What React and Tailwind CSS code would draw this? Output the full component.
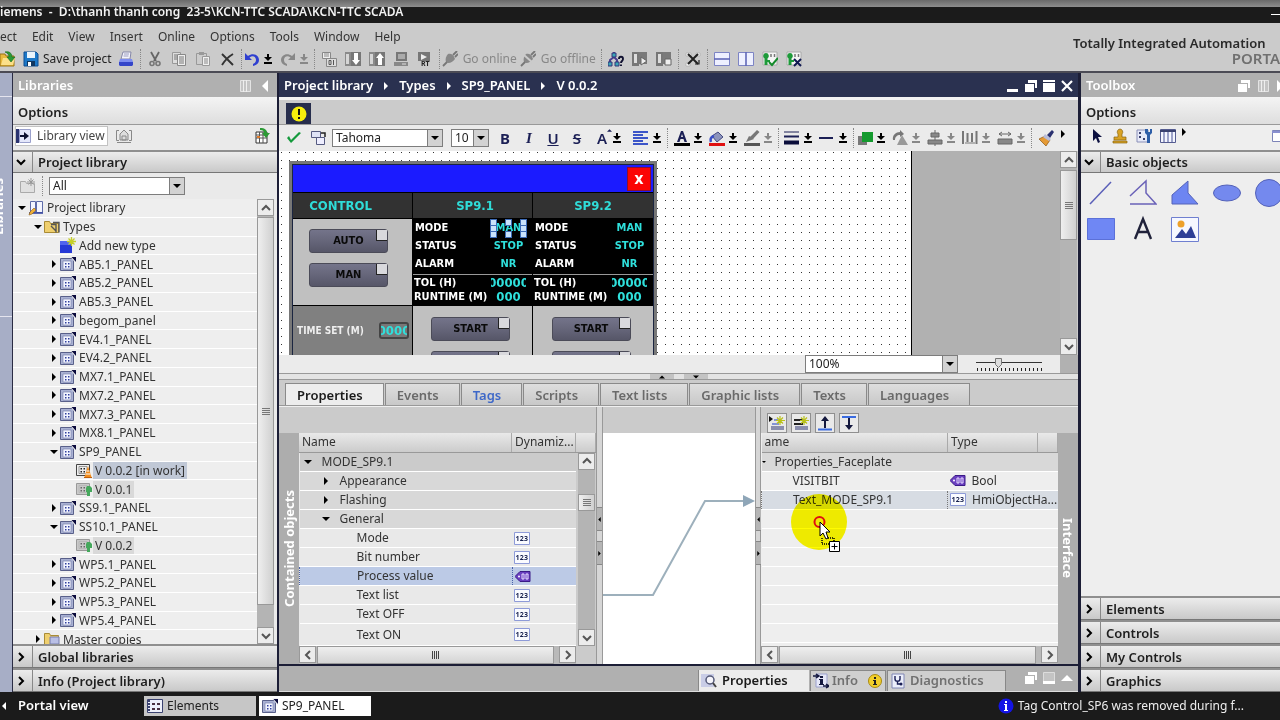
import React from "react";

const UI = "font-['Noto_Sans','Open_Sans',sans-serif]";
const HMI = "font-['DejaVu_Sans_Condensed','DejaVu_Sans',sans-serif]";

/* ---------- icons ---------- */

function Ico({ children, w = 16, h = 16 }) {
  return (
    <svg width={w} height={h} viewBox={`0 0 ${w} ${h}`} className="block shrink-0" aria-hidden="true">
      {children}
    </svg>
  );
}

const OpenIcon = () => (
  <Ico>
    <path d="M0 3h5l1 2h8v10H0z" fill="#e8b93c" stroke="#9a7417" />
    <path d="M1 14l2-7h12l-2 7z" fill="#fbe08a" />
    <path d="M5 1c4-1 7 1 7 5h3l-4 5-4-5h2c0-2-1-4-4-5z" fill="#2c9a35" stroke="#14661c" strokeWidth=".6" />
  </Ico>
);
const SaveIcon = () => (
  <Ico>
    <path d="M1 1h12l2 2v12H1z" fill="#1c78c8" stroke="#0c4d92" />
    <path d="M4 1h8v6H4z" fill="#e8f3fc" />
    <path d="M4 10h8v5H4z" fill="#10365f" />
    <path d="M5 11h3v4H5z" fill="#fff" />
  </Ico>
);
const PrintIcon = () => (
  <Ico>
    <path d="M5 1h8l-1 7H3z" fill="#f4f4fb" stroke="#8587a8" />
    <path d="M6 3h5M5.500 5h5" stroke="#9a9cc0" />
    <path d="M2 8h12l1 3H1z" fill="#7d8df0" />
    <path d="M1 11h14v3l-1 1H2l-1-1z" fill="#3445c9" />
  </Ico>
);
const CutIcon = () => (
  <Ico>
    <path d="M4 1l5 9M12 1L7 10" stroke="#666" strokeWidth="1.800" />
    <circle cx="5" cy="12.500" r="2" fill="none" stroke="#777" strokeWidth="1.600" />
    <circle cx="11" cy="12.500" r="2" fill="none" stroke="#777" strokeWidth="1.600" />
  </Ico>
);
const CopyIcon = () => (
  <Ico>
    <path d="M1.500 1.500h8v11h-8z" fill="#ddd" stroke="#999" />
    <path d="M6.500 3.500h8v11h-8z" fill="#eee" stroke="#888" />
    <path d="M8 6h5M8 8h5M8 10h5M8 12h5M3 4h3M3 6h3M3 8h3" stroke="#777" />
  </Ico>
);
const PasteIcon = () => (
  <Ico>
    <path d="M1.500 2.500h10v11h-10z" fill="#ccc" stroke="#999" />
    <path d="M4 1h5v3H4z" fill="#999" />
    <path d="M7.500 5.500h7v9h-7z" fill="#f0f0f0" stroke="#999" />
    <path d="M9 8h4M9 10h4M9 12h4" stroke="#888" />
  </Ico>
);
const DeleteIcon = () => (
  <Ico>
    <path d="M3 3l11 11M14 3C9 6 6 9 3 14" stroke="#333" strokeWidth="1.900" fill="none" />
  </Ico>
);
const CrossRefIcon = () => (
  <Ico>
    <path d="M1 2h5v3H1zM11 2h4v3h-4zM1 12h4v3H1z" fill="#f2f2f2" stroke="#aaa" strokeWidth=".6" />
    <path d="M3 3l10 10M13 3L3 13" stroke="#222" strokeWidth="2" fill="none" />
    <path d="M10 13h4v-4" stroke="#222" strokeWidth="1.200" fill="none" />
  </Ico>
);
const UndoIcon = ({ c = "#2f3fd0", flip }) => (
  <Ico>
    <g transform={flip ? "translate(16 0) scale(-1 1)" : undefined}>
      <path d="M1 2v7h7L5.500 6.500C9 4 12 6 12 9c0 2-1 3-3 4v2c4-1 6-3 6-6 0-5-6-8-11-4z" fill={c} />
    </g>
  </Ico>
);
const Drop = ({ c = "#000" }) => (
  <Ico w={8} h={12}>
    <path d="M3 1h2v3h3L4 8 0 4h3z" fill={c} />
    <path d="M0 9h8v2H0z" fill={c} />
  </Ico>
);
const CompileIcon = () => (
  <Ico>
    <path d="M1.500 1.500h8v6h-8z" fill="#eee" stroke="#888" />
    <path d="M3 3h5M3 5h5" stroke="#888" />
    <path d="M5.500 7.500h10v8h-10z" fill="#ddd" stroke="#888" />
    <path d="M8 9.500h2v4H8zM12.500 9v5" stroke="#555" fill="none" />
  </Ico>
);
const LoadIcon = ({ up }) => (
  <Ico>
    <path d="M0 1h6v14H0z" fill="#8a8a8a" />
    <path d="M1 3h3v10H1z" fill="#d6d6d6" />
    <path d="M6 1h10v14H6z" fill="#777" />
    <path d={up ? "M9 14V7H7l4-5 4 5h-2v7z" : "M9 2v7H7l4 5 4-5h-2V2z"} fill="#fff" />
  </Ico>
);
const ScreenIcon = () => (
  <Ico>
    <path d="M3 1h11v9H3z" fill="#777" />
    <path d="M5 3h7v5H5z" fill="#aaa" />
    <path d="M1 11h14v4H1z" fill="#888" />
    <path d="M9 13h4" stroke="#ddd" />
  </Ico>
);
const RtIcon = () => (
  <Ico>
    <path d="M1 1h12v9H1z" fill="#777" />
    <path d="M4 3l6 3-6 3z" fill="#eee" />
    <text x="4" y="15" fontSize="7" fontWeight="700" fill="#222">RT</text>
  </Ico>
);
const PlugIcon = ({ off }) => (
  <Ico>
    <path d="M6 3c3-1 6 1 7 5-3 4-7 5-9 3-1-3 0-6 2-8z" fill="#888" />
    <path d="M1 15l4-4M11 4l4-4M13 6l3-3" stroke="#777" strokeWidth="1.800" />
    {off && <path d="M4 4l9 8" stroke="#cbcbcb" strokeWidth="2" />}
  </Ico>
);
const NetIcon = () => (
  <Ico>
    <path d="M2 13V9l4-3 3 3v4M6 6V1" stroke="#4a3f8f" strokeWidth="2" fill="none" />
    <path d="M4 2h4v4H4zM0 11h4v4H0zM7 11h4v4H7z" fill="#39a6b5" stroke="#35357a" />
    <path d="M11 8c0-3 4-3 4 0 0 2-2 2-2 4M13 13.500v1.500" stroke="#101030" strokeWidth="1.900" fill="none" />
  </Ico>
);
const SimIcon = ({ stop }) => (
  <Ico>
    <path d="M0 1h7v14H0z" fill="#777" />
    <path d="M2 3h3v9H2z" fill="#ddd" />
    <path d="M7 1h8v12H7z" fill="#7a7a7a" />
    {stop ? <path d="M9 8h6v6H9z" fill="#eee" stroke="#666" /> : <path d="M9 6l6 4-6 4z" fill="#eee" stroke="#666" />}
  </Ico>
);
const SplitIcon = ({ v }) => (
  <Ico>
    <path d="M.5 1.500h15v13H.5z" fill="#eef0ff" stroke="#7d84c4" />
    <path d={v ? "M8 1v14" : "M0 8h16"} stroke="#6068b8" strokeWidth="1.600" />
  </Ico>
);
const PlcIcon = ({ x }) => (
  <Ico>
    <path d="M1 1h14v13H1z" fill="#f4f4f4" stroke="#aaa" />
    <path d="M9 3v3M12.500 3v3" stroke="#777" strokeWidth="1.500" />
    <path d="M4 2a3 3 0 011.500 5.500V9H8v2H5.500v3h-3V7.500A3 3 0 014 2z" fill="#1e9a3a" />
    {x ? <path d="M8 8l7 7M15 8l-7 7" stroke="#101850" strokeWidth="2" /> : <path d="M7 11l3 3 6-7" stroke="#138a2a" strokeWidth="2" fill="none" />}
  </Ico>
);
const Chevron = ({ d = "down", c = "#333" }) => (
  <Ico w={12} h={12}>
    <path
      d={{ down: "M2 4l4 4 4-4", up: "M2 8l4-4 4 4", left: "M8 2L4 6l4 4", right: "M4 2l4 4-4 4" }[d]}
      fill="none" stroke={c} strokeWidth="2"
    />
  </Ico>
);
const Tri = ({ d = "right", c = "#000", s = 8 }) => (
  <svg width={s} height={s} viewBox="0 0 8 8" className="block shrink-0" aria-hidden="true">
    <path d={{ right: "M2 0l4 4-4 4z", down: "M0 2h8L4 6z", left: "M6 0L2 4l4 4z", up: "M0 6h8L4 2z" }[d]} fill={c} />
  </svg>
);
const ColumnsIcon = () => (
  <Ico w={11} h={12}>
    <path d="M.5 .5h10v11H.5z" fill="#c4c4c4" stroke="#e4e4e4" />
    <path d="M3.500 0v12M6.500 0v12" stroke="#eee" />
  </Ico>
);
const RestoreIcon = () => (
  <Ico w={12} h={12}>
    <path d="M3 0h9v8h-2V3H3z" fill="#fff" />
    <path d="M0 4h9v8H0z" fill="#fff" />
  </Ico>
);
const TypeIcon = () => (
  <Ico>
    <path d="M.5 2.500h13v12H.5z" fill="#a9b1d3" stroke="#59608a" />
    <path d="M3 5h8v8H3z" fill="#f3f5ff" stroke="#7a82ad" strokeWidth=".7" />
    <path d="M5 7h1.500v1.500H5zM8 7h1.500v1.500H8zM5 10h1.500v1.500H5zM8 10h1.500v1.500H8z" fill="#2f3f9e" />
    <path d="M10 0h6v8z" fill="#f3f3f3" />
    <path d="M11.500 1H16v5z" fill="#0a0a3c" />
  </Ico>
);
const VersionIcon = ({ work }) => (
  <Ico>
    <path d="M.5 2.500h13v11H.5z" fill={work ? "#eee" : "#c9c9c9"} stroke={work ? "#444" : "#999"} />
    <path d="M3 4.500h8v7H3z" fill="none" stroke={work ? "#777" : "#b0b0b0"} strokeWidth=".7" />
    <path d="M4.500 6H6v1.500H4.500zM7.500 6H9v1.500H7.500zM4.500 9H6v1.500H4.500zM7.500 9H9v1.500H7.500z" fill={work ? "#222" : "#666"} />
    {work ? (
      <>
        <path d="M12 4l3.500 11h-7z" fill="#f08c1c" />
        <path d="M10.500 9h3M9.500 12h5" stroke="#fff" />
        <path d="M8 15.500h8" stroke="#c06010" />
      </>
    ) : (
      <path d="M11 5h3l2 2v4h-2v4h-3v-4H10V7z" fill="#45a85c" />
    )}
  </Ico>
);
const FolderIcon = ({ badge }) => (
  <Ico>
    <path d="M.5 2.500h5l1 2h8v9H.5z" fill="#efcf6e" stroke="#a98b35" />
    {badge === "types" ? (
      <path d="M7 5.500h5v8M9 3.500h6v10M7 7l5 5" fill="none" stroke="#555" strokeWidth="1.400" />
    ) : (
      <path d="M6 6h9v7H6z" fill="#b9bfe6" stroke="#767dad" />
    )}
  </Ico>
);
const BookIcon = () => (
  <Ico>
    <path d="M2.500 1.500h5v11h-5zM8.500 1.500h6v11h-6z" fill="#f3f5ff" stroke="#5e6ba8" />
    <path d="M1 13h14" stroke="#3848a0" strokeWidth="1.600" />
    <path d="M1 15l1-3 4-4 2 2-4 4z" fill="#f0b13a" stroke="#8b5d14" strokeWidth=".6" />
  </Ico>
);
const NewTypeIcon = () => (
  <Ico>
    <path d="M0 4h12v12H0z" fill="#2639d6" />
    <path d="M0 4h12v4H0z" fill="#5163ee" />
    <path d="M11.500 0v9M7 4.500h9M8.500 1.500l6 6M14.500 1.500l-6 6" stroke="#c5cf2a" strokeWidth="1.300" />
  </Ico>
);
const ValueIcon = () => (
  <Ico w={16} h={13}>
    <path d="M.5 .5h15v12H.5z" fill="#fafbff" stroke="#8e9bd8" />
    <text x="1.500 5.800 10.100" y="9" fontSize="7" fontWeight="700" fill="#16204e">123</text>
  </Ico>
);
const TagIcon = () => (
  <Ico w={16} h={13}>
    <path d="M0 6.500l5-5h10v10H5z" fill="#6a3fc0" stroke="#3a1a86" />
    <path d="M7 4v5h2V4zM11 4v5h2V4z" fill="none" stroke="#e6dcff" />
    <circle cx="4" cy="6.500" r="1" fill="#fff" />
  </Ico>
);

/* ---------- shared pieces ---------- */

const barBg = "bg-linear-to-b from-[#ececec] to-[#c9c9c9]";

function Sep() {
  return <span className="mx-[2px] h-5 w-px shrink-0 border-l border-dotted border-[#888]" />;
}
function IconButton({ label, children, wide }) {
  return (
    <button type="button" aria-label={label} className={`flex h-5 shrink-0 items-center justify-center ${wide ? "w-6" : ""}`}>
      {children}
    </button>
  );
}
function Combo({ label, value, className }) {
  return (
    <span className={`relative flex h-[18px] shrink-0 ${className}`}>
      <select aria-label={label} className="w-full appearance-none border border-[#7d7d7d] bg-white px-[3px] text-xs leading-4 text-[#222]">
        <option>{value}</option>
      </select>
      <span className="pointer-events-none absolute inset-y-0 right-0 flex w-4 items-center justify-center border border-[#7d7d7d] bg-[#d2d2d2]">
        <Tri d="down" />
      </span>
    </span>
  );
}
function ScrollButton({ d }) {
  return (
    <button type="button" aria-label={`Scroll ${d}`} className="flex h-[17px] w-[17px] shrink-0 items-center justify-center border border-[#999] bg-[#ececec]">
      <Chevron d={d} c="#555" />
    </button>
  );
}
function VScroll({ before, size }) {
  return (
    <div className="flex w-[17px] shrink-0 flex-col bg-[#b4b4b4]">
      <ScrollButton d="up" />
      <div className={before} />
      <div className={`flex flex-col items-center justify-center gap-px border border-[#999] bg-linear-to-r from-[#efefef] to-[#d0d0d0] ${size}`}>
        {[0, 1, 2, 3].map((i) => <span key={i} className="h-px w-2 bg-[#777]" />)}
      </div>
      <div className="flex-1" />
      <ScrollButton d="down" />
    </div>
  );
}
function HScroll() {
  return (
    <div className="flex h-[18px] shrink-0 gap-px bg-[#b9b9b9]">
      <ScrollButton d="left" />
      <div className="mr-1 flex flex-1 items-center justify-center gap-px border border-[#999] bg-linear-to-b from-[#efefef] to-[#d4d4d4]">
        {[0, 1, 2, 3].map((i) => <span key={i} className="h-2 w-px bg-[#444]" />)}
      </div>
      <ScrollButton d="right" />
    </div>
  );
}
function PaneHeader({ title, children }) {
  return (
    <div className="flex h-6 shrink-0 items-center bg-[#b0b0b0] pt-px pl-[5px] text-[13px] font-semibold text-white">
      <h2 className="flex-1">{title}</h2>
      {children}
    </div>
  );
}
function OptionsBar() {
  return (
    <h3 className="flex h-7 shrink-0 items-center border-b border-[#999] bg-linear-to-b from-[#f4f4f4] to-[#dedede] px-[5px] pt-[5px] text-[13px] font-semibold text-[#222]">
      Options
    </h3>
  );
}
function Section({ title, open }) {
  return (
    <button type="button" aria-expanded={!!open} className={`flex w-full shrink-0 items-stretch border-t-2 border-b border-t-[#8f8f8f] border-b-[#777] text-left text-[13px] font-semibold text-[#1e1e1e] ${open ? "h-[23px]" : "h-6"} ${barBg}`}>
      <span className="flex w-5 items-center justify-center border-r border-[#888] pr-1">
        <Chevron d={open ? "down" : "right"} c="#000" />
      </span>
      <span className="self-center pl-[5px] leading-5">{title}</span>
    </button>
  );
}

/* ---------- title, menu, toolbar ---------- */

const menus = ["ect", "Edit", "View", "Insert", "Online", "Options", "Tools", "Window", "Help"];

function Header() {
  return (
    <header className="shrink-0 border-b-2 border-[#4b4b55] bg-[#cbcbcb]">
      <div className="h-[7px] bg-linear-to-b from-[#6a6a6a] to-[#8e8e8e]" />
      <div className="flex h-4 items-center justify-between bg-[#1b1b1b] pb-[6px] text-[12px] font-semibold text-[#f2f2f2]">
        <h1 className="whitespace-pre leading-4">{"iemens  -  D:\\thanh thanh cong  23-5\\KCN-TTC SCADA\\KCN-TTC SCADA"}</h1>
        <span className="mt-1 h-px w-[9px] bg-white" />
      </div>
      <div className="flex h-12 overflow-hidden">
        <div className="min-w-0 flex-1">
          <nav className="flex h-[26px] items-center gap-[15px] pt-[2px] text-xs text-[#333]">
            {menus.map((m) => <button type="button" key={m}>{m}</button>)}
          </nav>
          <div className="flex h-5 items-center text-xs text-[#222]">
            <IconButton label="Open"><OpenIcon /></IconButton>
            <span className="w-[7px]" />
            <button type="button" className="flex items-center gap-1"><SaveIcon />Save project</button>
            <span className="w-[2px]" />
            <IconButton label="Print" wide><PrintIcon /></IconButton>
            <Sep />
            <IconButton label="Cut" wide><CutIcon /></IconButton>
            <IconButton label="Copy" wide><CopyIcon /></IconButton>
            <IconButton label="Paste" wide><PasteIcon /></IconButton>
            <IconButton label="Delete" wide><DeleteIcon /></IconButton>
            <Sep />
            <IconButton label="Undo"><UndoIcon /></IconButton>
            <span className="w-1" />
            <IconButton label="Undo list"><Drop /></IconButton>
            <span className="w-1" />
            <IconButton label="Redo" wide><UndoIcon flip c="#888" /></IconButton>
            <IconButton label="Redo list"><Drop c="#888" /></IconButton>
            <span className="w-1" />
            <Sep />
            <IconButton label="Compile" wide><CompileIcon /></IconButton>
            <IconButton label="Download" wide><LoadIcon /></IconButton>
            <IconButton label="Upload" wide><LoadIcon up /></IconButton>
            <IconButton label="Simulate" wide><ScreenIcon /></IconButton>
            <IconButton label="Start runtime" wide><RtIcon /></IconButton>
            <Sep />
            <button type="button" className="flex items-center gap-[5px] text-[#888]"><PlugIcon />Go online</button>
            <span className="w-[3px]" />
            <button type="button" className="flex items-center gap-[5px] text-[#888]"><PlugIcon off />Go offline</button>
            <span className="w-[3px]" />
            <Sep />
            <IconButton label="Accessible devices" wide><NetIcon /></IconButton>
            <IconButton label="Start simulation" wide><SimIcon /></IconButton>
            <IconButton label="Stop simulation" wide><SimIcon stop /></IconButton>
            <Sep />
            <IconButton label="Cross-references" wide><CrossRefIcon /></IconButton>
            <Sep />
            <IconButton label="Split horizontally" wide><SplitIcon /></IconButton>
            <IconButton label="Split vertically" wide><SplitIcon v /></IconButton>
            <IconButton label="Connect" wide><PlcIcon /></IconButton>
            <IconButton label="Disconnect" wide><PlcIcon x /></IconButton>
          </div>
        </div>
        <div className="flex w-[207px] shrink-0 flex-col pt-3 font-semibold">
          <span className="whitespace-nowrap text-[13px] leading-4 text-[#2a2a2a]">Totally Integrated Automation</span>
          <span className="self-end text-[15px] leading-[14px] text-[#707070]">PORTA</span>
        </div>
      </div>
    </header>
  );
}

/* ---------- library tree ---------- */

const P = (name) => ({ lvl: 2, name, icon: <TypeIcon />, arrow: "right" });
const tree = [
  { lvl: 0, name: "Project library", icon: <BookIcon />, arrow: "down" },
  { lvl: 1, name: "Types", icon: <FolderIcon badge="types" />, arrow: "down" },
  { lvl: 2, name: "Add new type", icon: <NewTypeIcon /> },
  P("AB5.1_PANEL"), P("AB5.2_PANEL"), P("AB5.3_PANEL"), P("begom_panel"),
  P("EV4.1_PANEL"), P("EV4.2_PANEL"),
  P("MX7.1_PANEL"), P("MX7.2_PANEL"), P("MX7.3_PANEL"), P("MX8.1_PANEL"),
  { ...P("SP9_PANEL"), arrow: "down" },
  { lvl: 3, name: "V 0.0.2 [in work]", icon: <VersionIcon work />, mark: "bg-[#c0c8d6]" },
  { lvl: 3, name: "V 0.0.1", icon: <VersionIcon />, mark: "bg-[#d9d9d9]" },
  P("SS9.1_PANEL"),
  { ...P("SS10.1_PANEL"), arrow: "down" },
  { lvl: 3, name: "V 0.0.2", icon: <VersionIcon />, mark: "bg-[#d9d9d9]" },
  P("WP5.1_PANEL"), P("WP5.2_PANEL"), P("WP5.3_PANEL"), P("WP5.4_PANEL"),
  { lvl: 1, name: "Master copies", icon: <FolderIcon />, arrow: "right" },
];
const indent = ["pl-1", "pl-5", "pl-9", "pl-[52px]"];

function Libraries() {
  return (
    <aside className="flex w-[264px] shrink-0 flex-col bg-[#eaeaea]">
      <PaneHeader title="Libraries">
        <ColumnsIcon />
        <button type="button" aria-label="Collapse" className="mr-[6px] ml-2"><Tri d="left" c="#fff" s={12} /></button>
      </PaneHeader>
      <OptionsBar />
      <div className="flex h-[25px] shrink-0 items-center gap-2 px-[2px] pb-1">
        <button type="button" className="flex h-5 items-center gap-[5px] border border-[#c2c2c2] bg-white pr-[2px] text-xs text-[#444]">
          <Ico>
            <path d="M0 1h3v14H0z" fill="#2a3370" />
            <path d="M3.500 1.500h11v13h-11z" fill="#e4e7fa" stroke="#9aa0cc" />
            <path d="M4 7h4V4l5 4-5 4V9H4z" fill="#0e1130" />
          </Ico>
          Library view
        </button>
        <IconButton label="Element view">
          <Ico>
            <path d="M3 2.500H.5v10H3M13 2.500h2.500v10H13M1 14.500h14" fill="none" stroke="#888" />
            <path d="M8 2l4 4v6H4V6z" fill="#ddd" stroke="#888" />
            <path d="M6 8h4v4H6z" fill="none" stroke="#888" />
          </Ico>
        </IconButton>
        <span className="flex-1" />
        <span className="pr-1">
          <IconButton label="Open library">
            <Ico>
              <path d="M1 4h11v11H1z" fill="#fff" stroke="#333" />
              <path d="M1 7h11M1 10h11M4.500 4v11M8 4v11" stroke="#555" />
              <path d="M2 8h3v2H2z" fill="#e07a2a" />
              <path d="M5 0c5 0 7 2 7 5h3l-4 5-4-5h2c0-2-1-3-4-3z" fill="#2c9a35" />
            </Ico>
          </IconButton>
        </span>
      </div>
      <Section title="Project library" open />
      <div className="flex h-[25px] shrink-0 items-center gap-1 pl-[7px]">
        <IconButton label="New folder">
          <Ico>
            <path d="M.5 3.500h5l1 2h8v9H.5z" fill="#e0e0e0" stroke="#aaa" />
            <path d="M11 0v8M7 4h8M8.500 1.500l5 5M13.500 1.500l-5 5" stroke="#999" />
          </Ico>
        </IconButton>
        <Sep />
        <Combo label="Filter" value="All" className="w-[136px]" />
      </div>
      <div className="flex min-h-0 flex-1 pt-px pr-[3px]">
        <div className="min-w-0 flex-1 overflow-hidden bg-[#eeeeee]">
          <ul className="grid h-[450px] auto-rows-fr text-xs text-[#333]">
            {tree.map((n, i) => (
              <li key={i} className={`flex min-h-0 items-center border-b border-white ${indent[n.lvl]}`}>
                <span className="flex w-[10px] justify-center">{n.arrow && <Tri d={n.arrow} />}</span>
                <span className="ml-px">{n.icon}</span>
                <span className={`ml-px px-[2px] leading-[17px] ${n.mark || ""}`}>{n.name}</span>
              </li>
            ))}
          </ul>
        </div>
        <VScroll before="h-px" size="h-[388px]" />
      </div>
      <Section title="Global libraries" />
      <Section title="Info (Project library)" />
    </aside>
  );
}

/* ---------- editor ---------- */

function HmiButton({ children }) {
  return (
    <button type="button" className="relative flex h-6 w-[79px] shrink-0 items-center justify-center rounded-[3px] border border-[#4b4b58] bg-linear-to-b from-[#74748a] via-[#66667a] to-[#565668] text-[11px] font-bold text-[#0a0a0a]">
      {children}
      <span className="absolute top-0 right-0 h-[11px] w-[11px] border-b border-l border-[#222] bg-[#d9d9dd]" />
    </button>
  );
}

function Handles() {
  return (
    <span className="absolute inset-x-0 -inset-y-[2px] grid grid-cols-3 grid-rows-3 content-between justify-between">
      {[0, 1, 2, 3, 4, 5, 6, 7, 8].map((i) => (
        <span key={i} className={`h-[5px] w-[5px] self-center bg-[#c9e2fb] outline-1 outline-[#3c6ab5] ${i % 3 === 0 ? "justify-self-start" : i % 3 === 1 ? "justify-self-center" : "justify-self-end"} ${i === 4 ? "invisible" : ""}`} />
      ))}
    </span>
  );
}

function Unit({ selected }) {
  const rows = [["MODE", "MAN"], ["STATUS", "STOP"], ["ALARM", "NR"]];
  return (
    <div className="flex flex-col bg-[#c0c0c0]">
      <div className="bg-black text-[11px] font-bold text-white">
        <div className="h-[56px] border-b border-[#999]">
          {rows.map(([k, v], i) => (
            <div key={k} className="flex h-[18px] items-center justify-between pr-[6px] pl-[2px]">
              <span>{k}</span>
              <span className="relative flex h-[14px] w-[35px] items-center justify-center text-[#2fe0dc]">
                {v}
                {selected && i === 0 && <Handles />}
              </span>
            </div>
          ))}
        </div>
        <div className="flex h-[30px] justify-between pr-[6px] pl-px">
          <div className="flex flex-col justify-center leading-[14px] whitespace-nowrap">
            <span>TOL (H)</span>
            <span>RUNTIME (M)</span>
          </div>
          <div className="flex w-[35px] flex-col items-center justify-center overflow-hidden text-[13px] leading-[14px] text-[#2fe0dc]">
            <span>00000</span>
            <span>000</span>
          </div>
        </div>
      </div>
      <div className="flex flex-col items-center gap-[10px] border-t border-black pt-[11px] pr-1">
        <HmiButton>START</HmiButton>
        <HmiButton>STOP</HmiButton>
      </div>
    </div>
  );
}

function Faceplate() {
  return (
    <div className={`absolute top-[10px] left-[10px] w-[368px] border-[3px] border-[#777] ${HMI}`}>
      <div className="border border-[#1b2540]">
        <div className="flex h-7 items-center justify-end border-b border-black bg-[#1b1bff]">
          <button type="button" aria-label="Close" className="mr-[2px] flex h-6 w-6 items-center justify-center border border-[#8c1030] bg-[#fb0404] text-[16px] leading-4 font-bold text-white">x</button>
        </div>
        <div className="grid h-[25px] grid-cols-3 divide-x divide-black bg-[#323232] text-[13px] font-bold text-[#2fdcd8]">
          <span className="flex items-center justify-center pr-6">CONTROL</span>
          <span className="flex items-center justify-center pl-[5px]">SP9.1</span>
          <span className="flex items-center justify-center">SP9.2</span>
        </div>
        <div className="grid h-[240px] grid-cols-3 divide-x divide-black border-t border-black">
          <div className="flex flex-col bg-[#808080]">
            <div className="flex h-[87px] flex-col items-center gap-[10px] border-b border-black bg-[#c0c0c0] pt-[10px] pr-2">
              <HmiButton>AUTO</HmiButton>
              <HmiButton>MAN</HmiButton>
            </div>
            <div className="flex items-center justify-between pt-4 pr-[3px] pl-1 text-[10px] font-bold whitespace-nowrap text-[#eee]">
              TIME SET (M)
              <span className="flex h-[17px] w-[30px] justify-center overflow-hidden rounded-[3px] border-2 border-[#444] bg-[#777] text-[13px] leading-[14px] text-[#2fe0dc]">0000</span>
            </div>
          </div>
          <Unit selected />
          <Unit />
        </div>
      </div>
    </div>
  );
}

function FormatBar() {
  const letter = "text-[15px] leading-5 text-[#1b1f55]";
  return (
    <div className="flex h-[26px] shrink-0 items-center overflow-hidden bg-[#ebebeb] pl-[3px]">
      <IconButton label="Apply" wide><Ico><path d="M1 8l4 5L15 3l-2-1-8 8-2-4z" fill="#149a3c" /></Ico></IconButton>
      <IconButton label="Swap" wide>
        <Ico>
          <path d="M1.500 1.500h9v6h-9z" fill="#dfe3f6" stroke="#555a80" />
          <path d="M6.500 7.500h8v7h-8z" fill="#eef" stroke="#555a80" />
          <path d="M11 3h4v4" fill="none" stroke="#222" strokeWidth="1.500" />
        </Ico>
      </IconButton>
      <span className="w-[2px]" />
      <Combo label="Font" value="Tahoma" className="w-[111px]" />
      <span className="w-2" />
      <Combo label="Font size" value="10" className="w-[38px]" />
      <span className="w-1" />
      <button type="button" className={`w-6 font-bold ${letter}`}>B</button>
      <button type="button" className={`w-6 font-['Liberation_Serif',serif] font-bold italic ${letter}`}>I</button>
      <button type="button" className={`w-6 font-semibold underline ${letter}`}>U</button>
      <button type="button" className={`w-6 font-semibold line-through ${letter}`}>S</button>
      <button type="button" className={`flex w-6 font-semibold ${letter}`}><span className="pl-2">A</span><Tri d="up" c="#1b1f55" s={5} /></button>
      <Drop />
      <span className="w-3" />
      <Ico><path d="M0 2h15M0 5h10M0 8h15M0 11h10M0 14h15" stroke="#3c55c8" strokeWidth="2" /></Ico>
      <span className="w-1" />
      <Drop />
      <span className="w-1" />
      <Sep />
      <span className="w-1" />
      <Ico><path d="M0 13h16v3H0z" fill="#000" /><path d="M3 12L7 1h2l4 11h-2.500l-1-3H6.500l-1 3zM7 7h2L8 4z" fill="#1b1f55" /></Ico>
      <span className="w-1" />
      <Drop />
      <span className="w-[7px]" />
      <Ico><path d="M0 13h16v3H0z" fill="#e01010" /><path d="M3 6l6-4 5 5-6 5z" fill="#8d94bc" stroke="#444a80" /><path d="M2 12c-1-3 0-5 3-6" stroke="#3a4fc4" strokeWidth="2.500" fill="none" /></Ico>
      <span className="w-1" />
      <Drop />
      <span className="w-[7px]" />
      <Ico><path d="M0 13h16v3H0z" fill="#555" /><path d="M2 12l3-6 5 3zM6 7l7-7 2.500 2L9 9z" fill="#777" /></Ico>
      <span className="w-1" />
      <Drop c="#888" />
      <span className="w-1" />
      <Sep />
      <span className="w-[3px]" />
      <Ico><path d="M0 2h15" stroke="#1b1f55" /><path d="M0 6.500h15" stroke="#1b1f55" strokeWidth="2" /><path d="M0 12.500h15" stroke="#0a0d3a" strokeWidth="4" /></Ico>
      <span className="w-1" />
      <Drop />
      <span className="w-[7px]" />
      <Ico><path d="M0 8h14" stroke="#1b1f55" strokeWidth="2" /></Ico>
      <span className="w-1" />
      <Drop />
      <span className="w-1" />
      <Sep />
      <span className="w-[2px]" />
      <Ico><path d="M0 6h9v9H0z" fill="#777" /><path d="M4 2h11v10H4z" fill="#149a2e" /></Ico>
      <span className="w-[3px]" />
      <Drop />
      <span className="w-[7px]" />
      <Ico><path d="M1 10c-1-5 3-8 7-8V0l4 4-4 3V5C5 5 3 7 3 10z" fill="#777" /><path d="M10 5l6 10H5z" fill="#999" /></Ico>
      <span className="w-1" />
      <Drop c="#888" />
      <span className="w-[7px]" />
      <Ico><path d="M8 0v16" stroke="#666" /><path d="M4 3h8v4H4zM1 10h14v4H1z" fill="#888" stroke="#666" /></Ico>
      <span className="w-1" />
      <Drop c="#888" />
      <span className="w-[7px]" />
      <Ico><path d="M1 1v13M5.500 3v9M10 3v9M14.500 1v13" stroke="#777" strokeWidth="2" /><path d="M3 13h10" stroke="#777" /></Ico>
      <span className="w-1" />
      <Drop c="#888" />
      <span className="w-[7px]" />
      <Ico><path d="M2 4h12M5 2L2 4l3 2M11 2l3 2-3 2" stroke="#666" fill="none" /><path d="M1 9h14v5H1z" fill="#888" stroke="#666" /></Ico>
      <span className="w-1" />
      <Drop c="#888" />
      <span className="w-1" />
      <Sep />
      <span className="w-1" />
      <Ico><path d="M9 5l5-5 2 2-4 6z" fill="#2a3170" /><path d="M1 9l6-3 5 4-4 6z" fill="#e59a34" stroke="#8a5512" strokeWidth=".7" /><path d="M7 4l6 5-2 2-6-4z" fill="#b8bcd8" /></Ico>
      <span className="w-[5px] shrink-0" />
      <span className="mb-2"><Tri /></span>
    </div>
  );
}

const crumbs = ["Project library", "Types", "SP9_PANEL", "V 0.0.2"];
const tabs = ["Properties", "Events", "Tags", "Scripts", "Text lists", "Graphic lists", "Texts", "Languages"];
const objectRows = [
  ["MODE_SP9.1", "down", "pl-1", "bg-[#cbcbcb]"],
  ["Appearance", "right", "pl-[22px]", "bg-[#d8d8d8]"],
  ["Flashing", "right", "pl-[22px]", "bg-[#d8d8d8]"],
  ["General", "down", "pl-[22px]", "bg-[#d8d8d8]"],
  ["Mode", null, "pl-10", "", "v"],
  ["Bit number", null, "pl-10", "", "v"],
  ["Process value", null, "pl-10", "bg-[#bccae6]", "t"],
  ["Text list", null, "pl-10", "", "v"],
  ["Text OFF", null, "pl-10", "", "v"],
  ["Text ON", null, "pl-10", "", "v"],
];

function Splitter({ className }) {
  return (
    <div className={`flex shrink-0 flex-col items-center border-x border-[#999] bg-[#d6d6d6] pt-[100px] ${className}`}>
      <span className="flex h-6 items-center border-y border-[#888] bg-[#b5b5b5]"><Tri d="left" s={5} /></span>
      <span className="h-[10px]" />
      <span className="flex h-6 items-center border-y border-[#888] bg-[#b5b5b5]"><Tri d="right" s={5} /></span>
    </div>
  );
}

const th = "border-r border-b border-r-[#aaa] border-b-[#999] bg-linear-to-b from-[#e9e9e9] to-[#cccccc] px-[3px] text-left font-normal whitespace-nowrap";

function Interface() {
  return (
    <div className="relative flex min-w-0 flex-1 flex-col">
      <div className="flex h-[26px] shrink-0 items-center gap-1 bg-[#cbcbcb] pt-[5px] pl-[6px]">
        {["Add category", "Add property", "Move up", "Move down"].map((l, i) => (
          <button type="button" key={l} aria-label={l} className="flex h-5 w-5 items-center justify-center border border-[#8f8f8f] bg-[#e9e9e9]">
            <Ico>
              {i < 2 ? (
                <>
                  <path d={i ? "M1 5h9M1 9h9" : "M5 5h4M3 9h7"} stroke={i ? "#222" : "#8393d8"} strokeWidth="2" />
                  {i === 0 && <path d="M0 1l4 3-4 3z" fill="#111" />}
                  <path d="M2 13h13" stroke="#8a8eae" strokeWidth="4" />
                  <path d="M11 1v9M7 5.500h9M8 2.500l6 6M14 2.500l-6 6" stroke="#b9c11a" strokeWidth="1.200" />
                </>
              ) : (
                <>
                  <path d={i === 2 ? "M1 14.500h14" : "M1 2h14"} stroke="#3a6be0" strokeWidth="2" />
                  <path d={i === 2 ? "M7 13V6H4l4-5 4 5H9v7z" : "M7 3v7H4l4 5 4-5H9V3z"} fill="#14183e" />
                </>
              )}
            </Ico>
          </button>
        ))}
      </div>
      <div className="flex min-h-0 flex-1">
        <div className="flex min-w-0 flex-1 flex-col overflow-hidden bg-[#eeeeee]">
          <table className="w-full table-fixed border-collapse text-xs text-[#333]">
            <thead>
              <tr className="h-[19px]">
                <th className={th}>ame</th>
                <th className={`w-[90px] ${th}`}>Type</th>
                <th className={`w-5 ${th}`} aria-label="More" />
              </tr>
            </thead>
            <tbody>
              <tr className="h-[19px] border-b border-white bg-[#d8d8d8]">
                <td colSpan={3}><span className="flex items-center gap-[9px] leading-4"><Tri d="down" s={4} />Properties_Faceplate</span></td>
              </tr>
              <tr className="h-[19px] border-b border-white">
                <td className="pl-[31px] leading-4">VISITBIT</td>
                <td colSpan={2}><span className="flex items-center gap-[6px] pl-[2px] leading-4"><TagIcon />Bool</span></td>
              </tr>
              <tr className="h-[19px] border-b border-white bg-[#d7dce3]">
                <td className="border border-dotted border-[#777] pl-[31px] leading-4">Text_MODE_SP9.1</td>
                <td colSpan={2}><span className="flex items-center gap-[6px] pl-[2px] leading-4"><ValueIcon />HmiObjectHa...</span></td>
              </tr>
              {[0, 1, 2, 3, 4, 5, 6].map((i) => <tr key={i} className="h-[19px] border-b border-white"><td colSpan={3} /></tr>)}
            </tbody>
          </table>
          <span className="flex-1" />
          <HScroll />
        </div>
        <div className="flex w-5 shrink-0 items-center justify-center bg-[#adadad] text-[13px] leading-5 font-bold text-white">
          <span className="[writing-mode:vertical-rl]">Interface</span>
        </div>
      </div>
      <span className="pointer-events-none absolute top-[87px] left-[30px] h-14 w-14 rounded-full bg-[#fffb00] mix-blend-multiply" />
      <svg className="pointer-events-none absolute top-[107px] left-[50px]" width="32" height="40" viewBox="0 0 32 40" aria-hidden="true">
        <circle cx="8.500" cy="8" r="5" fill="none" stroke="#e01010" strokeWidth="2" />
        <path d="M9 8v14l3-3 3 6 2-1-2-6h4z" fill="#fff" stroke="#000" />
        <path d="M11 24v6h11M17 24h6v4" fill="none" stroke="#000" strokeDasharray="1 1" strokeWidth="1.500" />
        <path d="M18.500 27.500h10v10h-10z" fill="#fff" stroke="#000" />
        <path d="M20.500 32.500h6M23.500 29.500v6" stroke="#000" />
      </svg>
    </div>
  );
}

function Editor() {
  return (
    <main className="flex min-w-0 flex-1 flex-col bg-[#cbcbcb]">
      <div className="flex h-6 shrink-0 items-center bg-[#2a3150] pt-px pr-[5px] pl-[5px] text-[13px] font-semibold text-white">
        <ol className="flex flex-1 items-center">
          {crumbs.map((c, i) => (
            <li key={c} className="flex items-center">
              {i > 0 && <span className="mx-[9px]"><Tri c="#fff" /></span>}
              {c}
            </li>
          ))}
        </ol>
        <div className="flex items-center gap-[6px]">
          <button type="button" aria-label="Minimize"><Ico w={12} h={12}><path d="M0 9h11v3H0z" fill="#fff" /></Ico></button>
          <button type="button" aria-label="Restore"><RestoreIcon /></button>
          <button type="button" aria-label="Maximize"><Ico w={12} h={12}><path d="M0 0h12v12H0z" fill="#fff" /><path d="M0 2.500h12" stroke="#2a3150" /></Ico></button>
          <button type="button" aria-label="Close"><Ico w={12} h={12}><path d="M1 1l10 10M11 1L1 11" stroke="#fff" strokeWidth="2.200" /></Ico></button>
        </div>
      </div>
      <div className="flex h-7 shrink-0 items-end border-t-[3px] border-b border-t-[#f2f2f2] border-b-[#999] pl-[7px]">
        <button type="button" aria-label="Warnings" className="flex h-[21px] w-[25px] items-center justify-center bg-[#262d4c]">
          <Ico>
            <circle cx="8" cy="8" r="7.500" fill="#f7ee0c" />
            <path d="M7 3h2v6H7zM7 11h2v2H7z" fill="#111" />
          </Ico>
        </button>
      </div>
      <FormatBar />

      <div className="flex min-h-0 flex-1 overflow-hidden pr-px">
        <div className="relative min-w-0 flex-1 overflow-hidden border-r border-black bg-white bg-[conic-gradient(from_270deg_at_1px_1px,#333_90deg,transparent_0)] bg-[length:8px_8px] bg-[position:2px_1px]">
          <Faceplate />
        </div>
        <div className="w-[148px] shrink-0 bg-[#b1b1b1]" />
        <VScroll before="h-[2px]" size="h-[70px]" />
      </div>

      <div className="flex h-[18px] shrink-0 items-center justify-end bg-[#ebebeb]">
        <Combo label="Zoom" value="100%" className="w-[153px]" />
        <label className="relative mr-4 ml-[18px] flex h-4 w-[68px] flex-col justify-end">
          <span className="sr-only">Zoom level</span>
          <input type="range" min="0" max="100" defaultValue="33" className="absolute inset-0 h-full w-full opacity-0" />
          <Ico w={68} h={16}>
            <path d="M0 6.500h66" stroke="#333" />
            <path d="M1 13.500h66" stroke="#222" strokeWidth="3" strokeDasharray="1 3" />
            <path d="M19.500 2.500h6v6l-3 3-3-3z" fill="#ddd" stroke="#777" />
          </Ico>
        </label>
        <div className="h-full w-[18px] bg-[#b1b1b1]" />
      </div>
      <div className="flex h-[7px] shrink-0 items-end justify-center gap-[10px] border-y border-[#999] bg-[#e3e3e3]">
        <span className="flex h-[5px] w-6 items-center justify-center bg-[#c3c3c3]"><Tri d="up" s={6} /></span>
        <span className="flex h-[5px] w-6 items-center justify-center bg-[#c3c3c3]"><Tri d="down" s={6} /></span>
      </div>

      <div role="tablist" className="flex h-[26px] shrink-0 items-end gap-px border-b border-[#999] pl-[6px] text-[13px] font-semibold">
        {tabs.map((t, i) => (
          <button
            key={t} type="button" role="tab" aria-selected={i === 0}
            className={`h-[22px] border-x border-t border-[#8a8a8a] pr-5 pl-[11px] leading-[18px] whitespace-nowrap ${
              i === 0 ? "bg-[#ededed] text-[#1a1a1a]" : "bg-linear-to-b from-[#dedede] to-[#c8c8c8]"
            } ${i === 2 ? "text-[#3e68c8]" : i ? "text-[#6a6a6a]" : ""}`}
          >
            {t}
          </button>
        ))}
      </div>

      <div className="flex h-[260px] shrink-0 border-b-2 border-t border-t-[#f0f0f0] border-b-[#1c1e36]">
        <div className="flex w-[317px] shrink-0 flex-col">
          <div className="h-[26px] shrink-0" />
          <div className="flex min-h-0 flex-1">
            <div className="flex w-5 shrink-0 items-center justify-center bg-[#adadad] text-[13px] leading-5 font-bold text-white">
              <span className="rotate-180 whitespace-nowrap [writing-mode:vertical-rl]">Contained objects</span>
            </div>
            <div className="flex min-w-0 flex-1 flex-col">
              <table className="w-full table-fixed border-collapse text-xs text-[#333]">
                <thead>
                  <tr className="h-[19px]">
                    <th className={th}>Name</th>
                    <th className={`w-[64px] ${th}`}>Dynamiz...</th>
                    <th className={`w-5 ${th}`} aria-label="More" />
                  </tr>
                </thead>
              </table>
              <div className="flex min-h-0 flex-1">
                <div className="flex min-w-0 flex-1 flex-col bg-[#e9e9e9]">
                  <table className="w-full table-fixed border-collapse text-xs text-[#333]">
                    <tbody>
                      {objectRows.map(([name, arrow, pad, bg, kind]) => (
                        <tr key={name} className={`h-[19px] border-b border-white last:h-[22px] ${bg}`}>
                          <td className={kind === "t" ? "border border-dotted border-[#4a62a8]" : ""}>
                            <span className={`flex items-center leading-4 ${pad}`}>
                              {arrow && <Tri d={arrow} />}
                              <span className={arrow === null ? "pl-[17px]" : "pl-[10px]"}>{name}</span>
                            </span>
                          </td>
                          <td className="w-16 pl-[2px]">{kind === "v" && <ValueIcon />}{kind === "t" && <TagIcon />}</td>
                        </tr>
                      ))}
                    </tbody>
                  </table>
                  <span className="flex-1" />
                  <HScroll />
                </div>
                <div className="ml-[2px] flex flex-col pr-px pb-[18px]">
                  <div className="flex flex-1"><VScroll before="h-6" size="h-[17px]" /></div>
                </div>
              </div>
            </div>
          </div>
        </div>
        <Splitter className="w-[7px]" />
        <div className="flex min-w-[152px] flex-col">
          <div className="h-[26px] shrink-0" />
          <div className="flex-1 bg-white">
            <svg width="152" height="228" viewBox="0 0 152 228" className="block" aria-hidden="true">
              <path d="M0 162h50l52-94h40" fill="none" stroke="#9db0bc" strokeWidth="2" />
              <path d="M140 62l12 6-12 6z" fill="#8fa6b8" />
            </svg>
          </div>
        </div>
        <Splitter className="w-[6px]" />
        <Interface />
      </div>

      <div className="flex h-[26px] shrink-0 items-end gap-px border-b border-[#ddd] bg-[#b0b0b0] pr-[5px] text-[13px] font-semibold">
        <span className="flex-1" />
        <button type="button" className="flex h-[21px] w-[111px] items-center gap-[5px] border-l border-[#888] bg-[#ececec] pl-[2px] text-[#1a1a1a]">
          <Ico>
            <path d="M0 1h13v13H0z" fill="#c9cde6" />
            <circle cx="9" cy="7" r="4" fill="#f6f6fb" stroke="#555a78" strokeWidth="1.500" />
            <path d="M12 10l3 4" stroke="#444" strokeWidth="2" />
          </Ico>
          Properties
        </button>
        <button type="button" className="flex h-[21px] w-[76px] items-center gap-[3px] border-x border-t border-[#888] bg-[#cfcfcf] pl-[2px] text-[#707070]">
          <Ico>
            <path d="M3 1h11v13H3z" fill="#e6e8f8" stroke="#9aa0cc" />
            <path d="M0 3h5M3 1l3 2-3 2M10 13h6M13 11l3 2-3 2" stroke="#14183e" strokeWidth="1.500" fill="none" />
            <path d="M7 3h3v2H7zM6 6h4v5h1v1H6v-1h1V7H6z" fill="#14183e" />
          </Ico>
          <span className="flex-1 text-left">Info</span>
          <Ico w={18} h={14}>
            <circle cx="8" cy="7" r="6.500" fill="#f2cf2a" stroke="#a98a10" />
            <path d="M7 3h2v2H7zM6 6h3v4h1v1H6v-1h1V7H6z" fill="#222" />
          </Ico>
        </button>
        <button type="button" className="flex h-[21px] w-[119px] items-center gap-[5px] border-x border-t border-[#888] bg-[#cfcfcf] pl-[3px] text-[#707070]">
          <Ico w={14} h={16}>
            <path d="M1 1h12v14H1z" fill="#eceffb" stroke="#8087b5" />
            <path d="M4 3v3c0 3 5 3 5 0V3M6.500 8v3h3" fill="none" stroke="#1a1f55" strokeWidth="1.400" />
            <circle cx="10" cy="11" r="1.500" fill="#1a1f55" />
          </Ico>
          Diagnostics
        </button>
        <span className="flex h-[21px] w-[66px] items-start justify-end gap-[6px] pt-[2px]">
          <RestoreIcon />
          <Ico w={12} h={12}><path d="M.5 .5h11v10H.5z" fill="#c4c4c4" stroke="#ddd" /><path d="M0 9h12v3H0z" fill="#fff" /></Ico>
          <Ico w={12} h={12}><path d="M0 9l6-6 6 6z" fill="#fff" /></Ico>
        </span>
      </div>
    </main>
  );
}

/* ---------- toolbox ---------- */

const shapes = [
  ["Line", <path d="M3 26L24 4" stroke="#5a5fb8" strokeWidth="1.500" />],
  ["Polyline", <path d="M1 18L17 3v12l10 11H1" fill="none" stroke="#6a62b8" strokeWidth="1.500" />],
  ["Polygon", <path d="M1 17L17 3v12l10 11H1z" fill="#6d85f2" stroke="#5462b8" />],
  ["Ellipse", <ellipse cx="14" cy="15" rx="13.500" ry="8" fill="#7489ee" stroke="#5462b8" />],
  ["Circle", <circle cx="14" cy="15" r="13.500" fill="#7489ee" stroke="#5462b8" />],
  ["Rectangle", <path d="M.5 4.500h27v21H.5z" fill="#6f87f4" stroke="#5b70d8" />],
  ["Text field", <path d="M6 25L14 5l8 20M9 18h10" fill="none" stroke="#20223a" strokeWidth="2.400" />],
  ["Graphic view", (
    <>
      <path d="M.5 3.500h27v24H.5z" fill="#f6f8ff" stroke="#6f7fd0" />
      <circle cx="10" cy="10" r="3.500" fill="#eda12c" />
      <path d="M4 24l7-9 4 5 5-8 5 12z" fill="#2e3f96" />
    </>
  )],
];

function Toolbox() {
  return (
    <aside className="flex w-[199px] shrink-0 flex-col overflow-hidden bg-[#eeeeee]">
      <PaneHeader title="Toolbox">
        <span className="flex gap-2"><RestoreIcon /><ColumnsIcon /><Ico w={3} h={12}><path d="M0 0l3 3v6l-3 3z" fill="#fff" /></Ico></span>
      </PaneHeader>
      <OptionsBar />
      <div className="flex h-[25px] shrink-0 items-center gap-2 pb-1 pl-[7px]">
        <IconButton label="Select"><Ico><path d="M5 1v12l3-3 2 5 2-1-2-5h4z" fill="#0c1040" /></Ico></IconButton>
        <IconButton label="Stamp"><Ico><path d="M8 1a3 3 0 012 5v3h4v3H2V9h4V6a3 3 0 012-5zM1 13h14v2H1z" fill="#d9a325" stroke="#8a6510" strokeWidth=".7" /></Ico></IconButton>
        <IconButton label="Settings"><Ico><path d="M1 2h11v12H1z" fill="#e6e9f8" stroke="#8a90b8" /><path d="M3 4h2v2H3zM3 8h2v2H3zM7 10h2v2H7z" fill="#3a4270" /><path d="M9 1v4l2 2v8h3V7l2-2V1h-2v3h-2V1z" fill="#2d5ea8" /></Ico></IconButton>
        <IconButton label="Columns"><Ico><path d="M.5 1.500h15v13H.5z" fill="#f4f6ff" stroke="#555c90" /><path d="M0 3h16" stroke="#3a4270" strokeWidth="2" /><path d="M4 4v10M8 4v10M12 4v10" stroke="#8088b8" strokeWidth="1.500" /></Ico></IconButton>
        <span className="mb-2 -ml-1"><Tri /></span>
        <span className="flex-1" />
        <Ico w={8} h={14}><path d="M.5 1.500h12v11H.5z" fill="#fff" stroke="#7d84b8" /><path d="M0 3h8" stroke="#8a90d0" strokeWidth="2" /></Ico>
      </div>
      <Section title="Basic objects" open />
      <div className="grid flex-1 grid-cols-[repeat(5,28px)] content-start gap-x-[14px] gap-y-[6px] pt-[5px] pl-[6px]">
        {shapes.map(([name, art]) => (
          <button type="button" key={name} aria-label={name} className="h-[30px]"><Ico w={28} h={30}>{art}</Ico></button>
        ))}
      </div>
      {["Elements", "Controls", "My Controls", "Graphics"].map((t) => <Section key={t} title={t} />)}
    </aside>
  );
}

/* ---------- page ---------- */

export default function App() {
  return (
    <div className={`flex h-screen flex-col overflow-hidden bg-[#1b1b1b] ${UI}`}>
      <Header />
      <div className="flex min-h-0 flex-1">
        <div className="flex w-[13px] shrink-0 flex-col overflow-hidden border-r border-[#2a2c44] bg-[#a7aec6]">
          <div className="h-6 border-b border-[#e4e4ee]" />
          <div className="flex h-[220px] items-center justify-start border-b border-[#e4e4ee]">
            <span className="-ml-3 rotate-180 text-[13px] leading-5 font-bold whitespace-nowrap text-white [writing-mode:vertical-rl]">Libraries</span>
          </div>
        </div>
        <Libraries />
        <div className="w-[2px] shrink-0 bg-[#1c1e36]" />
        <Editor />
        <div className="w-[3px] shrink-0 bg-[#1c1e36]" />
        <Toolbox />
      </div>
      <footer className="flex h-7 shrink-0 items-center bg-[#1b1b1b] text-xs text-[#222]">
        <button type="button" className="flex w-[144px] items-center gap-[10px] text-[13px] font-semibold text-white"><Tri d="left" c="#fff" />Portal view</button>
        <button type="button" className="flex h-5 w-28 items-center gap-1 bg-[#c6c6c6] pl-[3px]">
          <Ico>
            <path d="M.5 1.500h15v13H.5z" fill="#eef0fa" stroke="#3a4270" />
            <path d="M2 2v12" stroke="#3a4270" strokeWidth="2" strokeDasharray="2 1" />
            <path d="M5 5h3v2H5zM10 5h3v2h-3zM5 10h3v2H5zM10 10h3v2h-3z" fill="#4a3040" />
          </Ico>
          Elements
        </button>
        <button type="button" className="ml-[3px] flex h-5 w-28 items-center gap-1 bg-white pl-[3px]"><TypeIcon />SP9_PANEL</button>
        <span className="flex-1" />
        <span className="flex items-center gap-1 pr-9 text-[#eee]">
          <Ico>
            <circle cx="8" cy="8" r="7.500" fill="#1414e6" />
            <path d="M7 3h2v2H7zM6 6h3v6h1v1H6v-1h1V7H6z" fill="#fff" />
          </Ico>
          Tag Control_SP6 was removed during f...
        </span>
      </footer>
    </div>
  );
}
